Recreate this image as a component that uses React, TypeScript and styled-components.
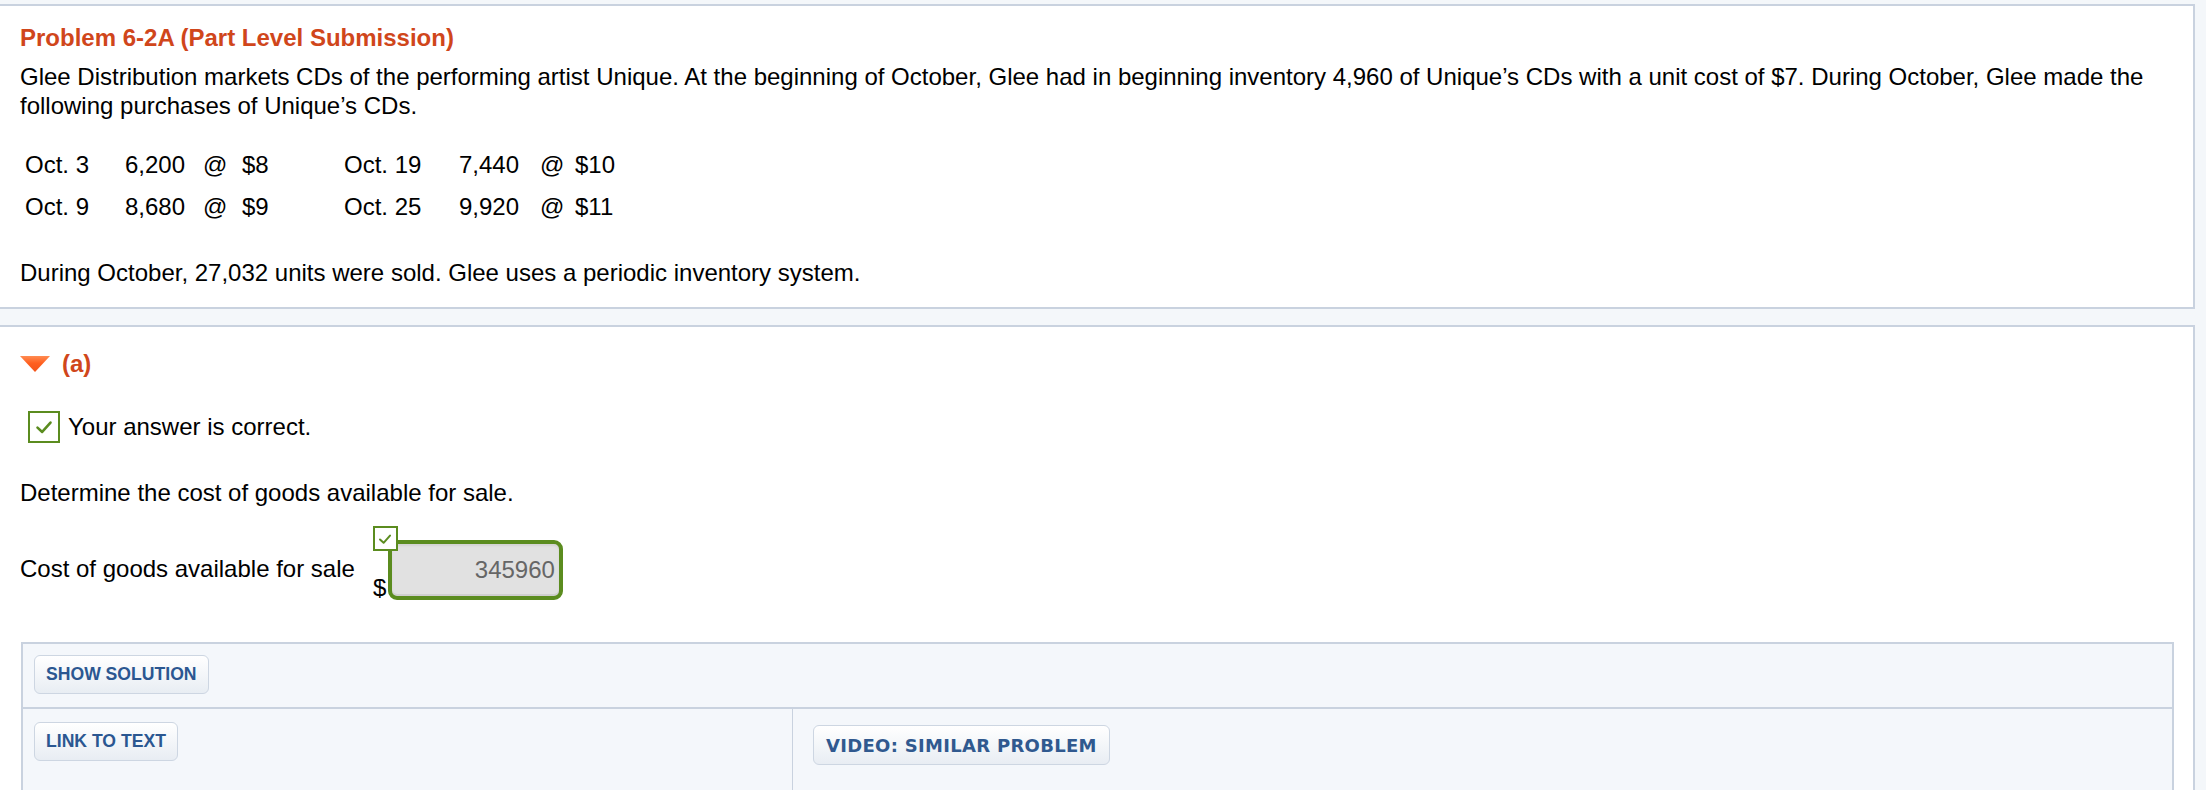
import React from 'react';
import styled, {createGlobalStyle} from 'styled-components';

const GlobalStyle = createGlobalStyle`
  html, body {
    margin: 0;
    padding: 0;
    background: #f4f7fa;
  }
  body {
    font-family: "Liberation Sans", Arial, Helvetica, sans-serif;
    color: #000;
  }
`;

type Purchase = {date: string; units: string; cost: string};

const leftPurchases: Purchase[] = [
    {date: 'Oct. 3', units: '6,200', cost: '$8'},
    {date: 'Oct. 9', units: '8,680', cost: '$9'},
];
const rightPurchases: Purchase[] = [
    {date: 'Oct. 19', units: '7,440', cost: '$10'},
    {date: 'Oct. 25', units: '9,920', cost: '$11'},
];

const CheckMark = ({size}: {size: number}) => (
    <svg width={size} height={size} viewBox="0 0 20 20" fill="none">
        <path d="M5 10.5 L8.6 13.8 L15 6.6" stroke="#5b8c1f" strokeWidth="2" strokeLinecap="round" strokeLinejoin="round"/>
    </svg>
);

const Triangle = () => (
    <svg width="30" height="16" viewBox="0 0 30 16">
        <defs>
            <linearGradient id="tri" x1="0" y1="0" x2="0" y2="1">
                <stop offset="0" stopColor="#ff8c52"/>
                <stop offset="0.45" stopColor="#ff5f1f"/>
                <stop offset="1" stopColor="#f2541a"/>
            </linearGradient>
        </defs>
        <path d="M0 0 H30 L15 16 Z" fill="url(#tri)"/>
    </svg>
);

const App = () => {
    return (
        <Page>
            <GlobalStyle/>
            <Panel>
                <Title>Problem 6-2A (Part Level Submission)</Title>
                <Paragraph>
                    Glee Distribution markets CDs of the performing artist Unique. At the beginning of October, Glee had in beginning inventory 4,960 of Unique’s CDs with a unit cost of $7. During October, Glee made the following purchases of Unique’s CDs.
                </Paragraph>
                <PurchaseTable>
                    {leftPurchases.map((p, i) => (
                        <React.Fragment key={p.date}>
                            <Cell>{p.date}</Cell>
                            <Cell>{p.units}</Cell>
                            <Cell>@</Cell>
                            <Cell>{p.cost}</Cell>
                            <Cell>{rightPurchases[i].date}</Cell>
                            <Cell>{rightPurchases[i].units}</Cell>
                            <Cell>@</Cell>
                            <Cell>{rightPurchases[i].cost}</Cell>
                        </React.Fragment>
                    ))}
                </PurchaseTable>
                <Closing>During October, 27,032 units were sold. Glee uses a periodic inventory system.</Closing>
            </Panel>

            <PartPanel>
                <PartHeader>
                    <Triangle/>
                    <PartLabel>(a)</PartLabel>
                </PartHeader>
                <Feedback>
                    <CheckBox $size={32}>
                        <CheckMark size={26}/>
                    </CheckBox>
                    <span>Your answer is correct.</span>
                </Feedback>
                <Question>Determine the cost of goods available for sale.</Question>
                <AnswerRow>
                    <AnswerLabel>Cost of goods available for sale</AnswerLabel>
                    <Field>
                        <SmallCheck $size={25}>
                            <CheckMark size={20}/>
                        </SmallCheck>
                        <Dollar>$</Dollar>
                        <AnswerInput>345960</AnswerInput>
                    </Field>
                </AnswerRow>

                <ToolBox>
                    <ToolRow>
                        <ToolButton>SHOW SOLUTION</ToolButton>
                    </ToolRow>
                    <ToolSplit>
                        <ToolCell>
                            <ToolButton>LINK TO TEXT</ToolButton>
                        </ToolCell>
                        <ToolCell $divider $pad="16px 20px">
                            <VideoButton>VIDEO: SIMILAR PROBLEM</VideoButton>
                        </ToolCell>
                    </ToolSplit>
                </ToolBox>
            </PartPanel>
        </Page>
    );
};

export default App;

const Page = styled.div`
  padding-top: 4px;
  width: 2195px;
`;

const Panel = styled.div`
  background: #fff;
  border: 2px solid #c9d2df;
  border-left: none;
  padding: 18px 20px 19px 20px;
`;

const Title = styled.div`
  color: #d0461b;
  font-weight: 700;
  font-size: 24px;
  line-height: 28px;
`;

const Paragraph = styled.div`
  margin-top: 10px;
  font-size: 24px;
  line-height: 29px;
`;

const PurchaseTable = styled.div`
  margin-top: 24px;
  margin-left: 5px;
  display: grid;
  grid-template-columns: 100px 78px 39px 102px 115px 81px 35px auto;
  grid-auto-rows: 42px;
  font-size: 24px;
  align-items: center;
`;

const Cell = styled.div`
  white-space: nowrap;
`;

const Closing = styled.div`
  margin-top: 30px;
  font-size: 24px;
  line-height: 30px;
`;

const PartPanel = styled.div`
  margin-top: 16px;
  background: #fff;
  border: 2px solid #c9d2df;
  border-left: none;
  border-bottom: none;
  padding: 22px 19px 40px 21px;
`;

const PartHeader = styled.div`
  display: flex;
  align-items: center;
  gap: 12px;
  height: 30px;
  margin-left: -1px;
`;

const PartLabel = styled.span`
  color: #d0461b;
  font-weight: 700;
  font-size: 24px;
`;

const Feedback = styled.div`
  margin-top: 32px;
  margin-left: 7px;
  display: flex;
  align-items: center;
  gap: 8px;
  font-size: 24px;
`;

const CheckBox = styled.div<{ $size: number }>`
  box-sizing: border-box;
  width: ${p => p.$size}px;
  height: ${p => p.$size}px;
  border: 2px solid #5b8c1f;
  background: #fff;
  display: flex;
  align-items: center;
  justify-content: center;
`;

const SmallCheck = styled(CheckBox)`
  position: absolute;
  left: 0;
  top: 0;
`;

const Question = styled.div`
  margin-top: 35px;
  font-size: 24px;
  line-height: 30px;
  margin-left: -1px;
`;

const AnswerRow = styled.div`
  margin-top: 18px;
  display: flex;
  align-items: flex-start;
  gap: 21px;
  margin-left: -1px;
`;

const AnswerLabel = styled.div`
  margin-top: 28px;
  font-size: 24px;
  line-height: 30px;
`;

const Field = styled.div`
  position: relative;
  display: flex;
  align-items: flex-end;
  padding-top: 14px;
  margin-left: -3px;
`;

const Dollar = styled.span`
  font-size: 24px;
  line-height: 24px;
  width: 15px;
`;

const AnswerInput = styled.div`
  box-sizing: border-box;
  width: 175px;
  height: 60px;
  border: 4px solid #5b8c1f;
  border-radius: 9px;
  background: #e1e1e1;
  box-shadow: inset 0 -2px 0 #cfcfcf, inset 0 2px 2px #d2d2d2;
  color: #666;
  font-size: 24px;
  display: flex;
  align-items: center;
  justify-content: flex-end;
  padding-right: 4px;
`;

const ToolBox = styled.div`
  margin-top: 42px;
  background: #f4f7fb;
  border: 2px solid #c9d2df;
  border-bottom: none;
`;

const ToolRow = styled.div`
  padding: 11px 11px 13px;
  border-bottom: 2px solid #c9d2df;
`;

const ToolSplit = styled.div`
  display: grid;
  grid-template-columns: 769px 1fr;
  min-height: 90px;
`;

const ToolCell = styled.div<{ $divider?: boolean; $pad?: string }>`
  padding: ${p => p.$pad || '13px 11px'};
  border-left: ${p => (p.$divider ? '1px solid #c9d2df' : 'none')};
`;

const ToolButton = styled.button`
  box-sizing: border-box;
  height: 39px;
  padding: 0 11px;
  border: 1.5px solid #cdd6e2;
  border-radius: 6px;
  background: linear-gradient(#ffffff, #e8edf3);
  color: #2b5791;
  font-family: "Liberation Sans", Arial, sans-serif;
  font-weight: 700;
  font-size: 17.6px;
  cursor: pointer;
`;

const VideoButton = styled(ToolButton)`
  height: 40px;
  padding: 0 12px;
  font-family: "DejaVu Sans", Verdana, sans-serif;
  font-size: 18px;
  letter-spacing: 0.3px;
  color: #30598f;
`;
